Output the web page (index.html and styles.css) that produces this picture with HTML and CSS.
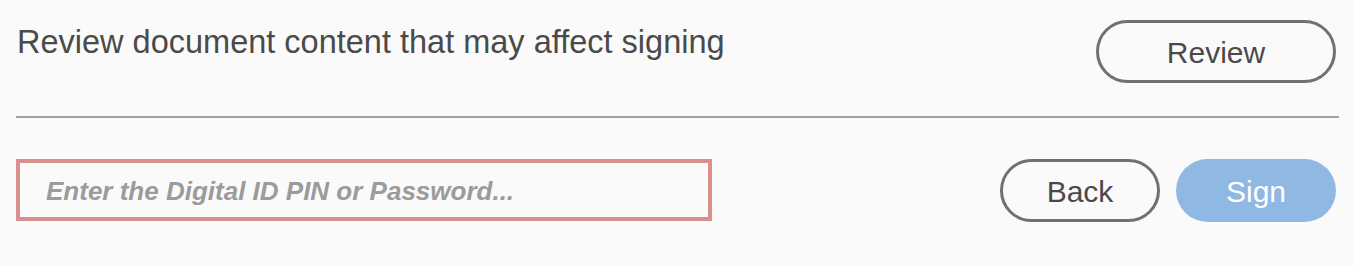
FILE: index.html
```html
<!DOCTYPE html>
<html>
<head>
<meta charset="utf-8">
<link rel="stylesheet" href="styles.css">
</head>
<body>
<div class="panel">
  <div class="top-row">
    <div class="title">Review document content that may affect signing</div>
    <button class="btn btn-outline btn-review">Review</button>
  </div>
  <div class="divider"></div>
  <div class="bottom-row">
    <input class="pin-input" type="password" placeholder="Enter the Digital ID PIN or Password...">
    <div class="actions">
      <button class="btn btn-outline btn-back">Back</button>
      <button class="btn btn-primary btn-sign">Sign</button>
    </div>
  </div>
</div>
</body>
</html>
```

FILE: styles.css
```css
html, body {
  margin: 0;
  padding: 0;
  background: #fafafa;
  font-family: "Liberation Sans", Arial, Helvetica, sans-serif;
}

.panel {
  padding: 0 15px 0 16px;
}

.top-row {
  display: flex;
  justify-content: space-between;
  align-items: flex-start;
  padding-right: 3px;
}

.title {
  margin-top: 22px;
  margin-left: 1px;
  font-size: 32.5px;
  line-height: 40px;
  color: #4a4a4a;
}

.btn {
  box-sizing: border-box;
  display: flex;
  align-items: center;
  justify-content: center;
  height: 63px;
  padding: 2px 0 0;
  border-radius: 32px;
  font-family: "Liberation Sans", Arial, Helvetica, sans-serif;
  font-size: 30px;
  cursor: pointer;
}

.btn-outline {
  background: #fafafa;
  border: 3px solid #707070;
  color: #4a4a4a;
}

.btn-review {
  width: 240px;
  margin-top: 20px;
}

.divider {
  margin-top: 33px;
  height: 2px;
  background: #a2a2a2;
}

.bottom-row {
  display: flex;
  justify-content: space-between;
  align-items: flex-start;
  margin-top: 41px;
  padding-right: 3px;
}

.pin-input {
  box-sizing: border-box;
  width: 696px;
  height: 62px;
  margin: 0;
  padding: 2px 0 0 26px;
  border: 4px solid #dc8f8f;
  border-radius: 0;
  background: #fafafa;
  outline: none;
  font-family: "Liberation Sans", Arial, Helvetica, sans-serif;
  font-size: 26px;
  color: #4a4a4a;
}

.pin-input::placeholder {
  color: #9b9b9b;
  font-style: italic;
  font-weight: bold;
}

.actions {
  display: flex;
  gap: 16px;
}

.btn-back {
  width: 160px;
}

.btn-primary {
  border: none;
  background: #8fb8e3;
  color: #ffffff;
}

.btn-sign {
  width: 160px;
}
```
